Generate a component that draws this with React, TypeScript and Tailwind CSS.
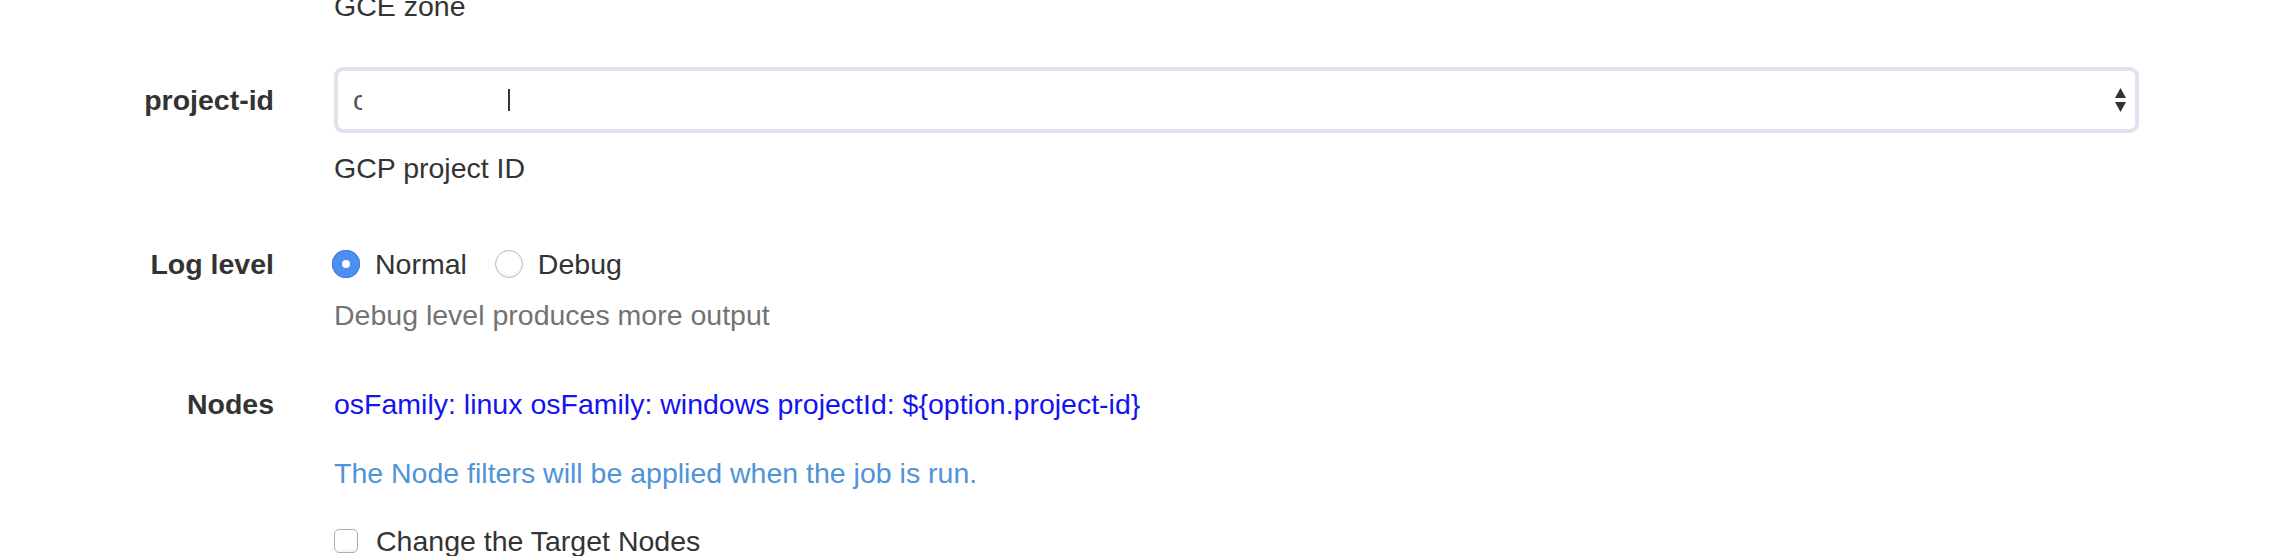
import React from "react";

export default function App() {
  return (
    <div
      className="w-[2286px] h-[556px] overflow-hidden bg-white text-[#333333] text-[28.5px] leading-[40px]"
      style={{ fontFamily: '"Liberation Sans", Arial, Helvetica, sans-serif' }}
    >
      {/* previous help text */}
      <div className="flex mt-[-14px]">
        <div className="w-[274px] shrink-0" />
        <div className="ml-[60px]">GCE zone</div>
      </div>

      {/* project-id row */}
      <div className="flex items-center mt-[41px] h-[66px]">
        <div className="w-[274px] shrink-0 text-right font-bold">project-id</div>
        <div className="ml-[60px] w-[1805px] h-[66px] border-4 border-[#dde4ee] rounded-[9px] bg-white flex items-center pl-[15px] pr-[9px]">
          <span className="inline-block w-[9px] overflow-hidden text-[#555]">c</span>
          <span className="ml-[146px] w-[2px] h-[22px] bg-[#333]" />
          <div className="ml-auto flex flex-col items-center gap-[4px]">
            <svg width="11" height="10" viewBox="0 0 11 10">
              <path d="M5.5 0 L11 10 L0 10 Z" fill="#333" />
            </svg>
            <svg width="11" height="10" viewBox="0 0 11 10">
              <path d="M0 0 L11 0 L5.5 10 Z" fill="#333" />
            </svg>
          </div>
        </div>
      </div>

      <div className="flex mt-[15px]">
        <div className="w-[274px] shrink-0" />
        <div className="ml-[60px]">GCP project ID</div>
      </div>

      {/* Log level */}
      <div className="flex mt-[56px]">
        <div className="w-[274px] shrink-0 text-right font-bold">Log level</div>
        <div className="ml-[58px] flex items-center h-[40px]">
          <span className="w-[28px] h-[28px] rounded-full bg-[#4c8ff0] flex items-center justify-center shadow-[inset_0_0_0_1px_#3f7fe0]">
            <span className="w-[8px] h-[8px] rounded-full bg-white" />
          </span>
          <span className="ml-[15px]">Normal</span>
          <span className="ml-[28px] w-[28px] h-[28px] rounded-full bg-white border-[1.5px] border-[#b9b9b9] shadow-[inset_0_-2px_2px_rgba(0,0,0,0.06)]" />
          <span className="ml-[15px]">Debug</span>
        </div>
      </div>

      <div className="flex mt-[11px]">
        <div className="w-[274px] shrink-0" />
        <div className="ml-[60px] text-[#737373]">Debug level produces more output</div>
      </div>

      {/* Nodes */}
      <div className="flex mt-[49px]">
        <div className="w-[274px] shrink-0 text-right font-bold">Nodes</div>
        <div className="ml-[60px] text-[#1414f0]">
          osFamily: linux osFamily: windows projectId: ${"{"}option.project-id{"}"}
        </div>
      </div>

      <div className="flex mt-[29px]">
        <div className="w-[274px] shrink-0" />
        <div className="ml-[60px] text-[#5093d8]">The Node filters will be applied when the job is run.</div>
      </div>

      <div className="flex mt-[28px]">
        <div className="w-[274px] shrink-0" />
        <div className="ml-[60px] flex items-center h-[40px]">
          <span className="w-[24px] h-[24px] rounded-[5px] border-[1.5px] border-[#b0b0b0] bg-white shadow-[inset_0_-2px_2px_rgba(0,0,0,0.05)]" />
          <span className="ml-[18px]">Change the Target Nodes</span>
        </div>
      </div>
    </div>
  );
}
